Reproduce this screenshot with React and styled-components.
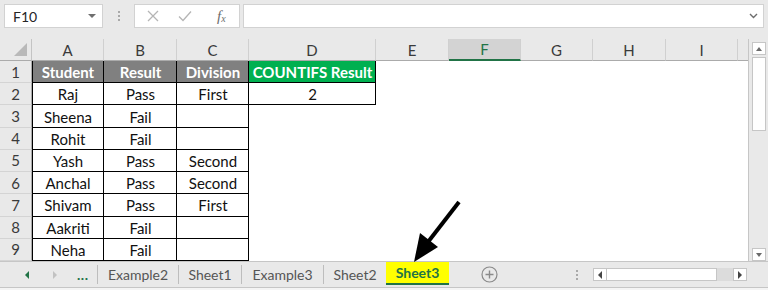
import React from "react";
import styled, { createGlobalStyle, css } from "styled-components";

const GlobalStyle = createGlobalStyle`
  html, body {
    margin: 0;
    padding: 0;
    background: #e9e9e9;
  }
  body {
    font-family: Lato, "Open Sans", sans-serif;
  }
`;

const COLUMNS = ["A", "B", "C", "D", "E", "F", "G", "H", "I", ""];
const COL_WIDTHS = [72, 73, 72, 127, 73, 72, 72, 73, 72, 10];

const ROWS = [
  ["Student", "Result", "Division", "COUNTIFS Result"],
  ["Raj", "Pass", "First", "2"],
  ["Sheena", "Fail", ""],
  ["Rohit", "Fail", ""],
  ["Yash", "Pass", "Second"],
  ["Anchal", "Pass", "Second"],
  ["Shivam", "Pass", "First"],
  ["Aakriti", "Fail", ""],
  ["Neha", "Fail", ""],
];

const TABS = [
  { name: "Example2", width: 80 },
  { name: "Sheet1", width: 62 },
  { name: "Example3", width: 81 },
  { name: "Sheet2", width: 62 },
  { name: "Sheet3", width: 63, active: true },
];

function cellKind(r, c) {
  if (r === 0 && c < 3) return "head";
  if (r === 0 && c === 3) return "green";
  if (c < 3 || (c === 3 && r < 2)) return "data";
  return "empty";
}

export default function App() {
  return (
    <Page>
      <GlobalStyle />
      <FormulaBar>
        <NameBox>
          F10
          <Caret />
        </NameBox>
        <Grip>
          <Dot />
          <Dot />
          <Dot />
        </Grip>
        <FxButtons>
          <svg width="12" height="12" viewBox="0 0 12 12">
            <path d="M1 1 L11 11 M11 1 L1 11" stroke="#b5b5b5" strokeWidth="1.3" />
          </svg>
          <svg width="14" height="12" viewBox="0 0 14 12">
            <path d="M1 6.5 L5 10.5 L13 1.5" stroke="#b5b5b5" strokeWidth="1.3" fill="none" />
          </svg>
          <Fx>
            f<sub>x</sub>
          </Fx>
        </FxButtons>
        <FormulaInput>
          <svg width="9" height="6" viewBox="0 0 9 6">
            <path d="M1 1 L4.5 4.5 L8 1" stroke="#6d6d6d" strokeWidth="1.4" fill="none" />
          </svg>
        </FormulaInput>
      </FormulaBar>

      <Main>
        <Sheet>
          <Corner>
            <CornerTriangle />
          </Corner>
          {COLUMNS.map((col, i) => (
            <ColHeader key={col + i} $active={col === "F"} $last={i === COLUMNS.length - 1}>
              {col}
            </ColHeader>
          ))}
          {ROWS.map((row, r) => (
            <React.Fragment key={r}>
              <RowHeader>{r + 1}</RowHeader>
              {COLUMNS.map((_, c) => {
                const kind = cellKind(r, c);
                return (
                  <Cell key={c} $kind={kind} $first={c === 0}>
                    {row[c] || ""}
                  </Cell>
                );
              })}
            </React.Fragment>
          ))}
        </Sheet>
        <VScroll>
          <ScrollBtn>
            <UpTri />
          </ScrollBtn>
          <VThumb />
          <VTrack />
          <ScrollBtn>
            <DownTri />
          </ScrollBtn>
        </VScroll>
      </Main>

      <TabBar>
        <TabNav>
          <NavTri $dir="left" $on />
          <NavTri $dir="right" />
          <More>...</More>
        </TabNav>
        {TABS.map((t) => (
          <React.Fragment key={t.name}>
            {!t.active && <TabSep />}
            <Tab $w={t.width} $active={t.active}>
              {t.name}
            </Tab>
          </React.Fragment>
        ))}
        <AddSheet>
          <svg width="17" height="17" viewBox="0 0 17 17">
            <circle cx="8.5" cy="8.5" r="7.5" stroke="#8a8a8a" strokeWidth="1.2" fill="none" />
            <path d="M8.5 4.5 V12.5 M4.5 8.5 H12.5" stroke="#8a8a8a" strokeWidth="1.4" />
          </svg>
        </AddSheet>
        <Splitter>
          <Dot />
          <Dot />
          <Dot />
        </Splitter>
        <HScroll>
          <HBtn>
            <NavTri $dir="left" $dark />
          </HBtn>
          <HThumb />
          <HTrack />
          <HBtn>
            <NavTri $dir="right" $dark />
          </HBtn>
        </HScroll>
      </TabBar>
      <StatusStrip />

      <Pointer width="768" height="290" viewBox="0 0 768 290">
        <line x1="459" y1="202" x2="428" y2="242" stroke="#000" strokeWidth="4" />
        <polygon points="414,262 438,247 420,233" fill="#000" />
      </Pointer>
    </Page>
  );
}

const Page = styled.div`
  position: relative;
  width: 768px;
  height: 290px;
  background: #e9e9e9;
  overflow: hidden;
`;

const FormulaBar = styled.div`
  display: flex;
  align-items: center;
  height: 24px;
  padding: 4px 4px 11px 4px;
`;

const whiteBox = css`
  background: #fff;
  border: 1px solid #d2d2d2;
  box-sizing: border-box;
  height: 24px;
`;

const NameBox = styled.div`
  ${whiteBox};
  width: 99px;
  display: flex;
  align-items: center;
  justify-content: space-between;
  padding: 0 6px 0 8px;
  font-size: 14px;
  color: #262626;
`;

const Caret = styled.span`
  width: 0;
  height: 0;
  border-left: 4px solid transparent;
  border-right: 4px solid transparent;
  border-top: 4px solid #6f6f6f;
`;

const Grip = styled.div`
  width: 31px;
  display: flex;
  flex-direction: column;
  align-items: center;
  gap: 2px;
`;

const Dot = styled.span`
  width: 2px;
  height: 2px;
  background: #a9a9a9;
`;

const FxButtons = styled.div`
  ${whiteBox};
  width: 106px;
  display: flex;
  align-items: center;
  padding-left: 12px;
  gap: 19px;
`;

const Fx = styled.span`
  font-family: "Liberation Serif", serif;
  font-style: italic;
  font-size: 15px;
  color: #6d6d6d;
  margin-left: 6px;

  sub {
    font-size: 10px;
    vertical-align: -1px;
  }
`;

const FormulaInput = styled.div`
  ${whiteBox};
  flex: 1;
  margin-left: 3px;
  display: flex;
  align-items: center;
  justify-content: flex-end;
  padding-right: 5px;
`;

const Main = styled.div`
  display: flex;
  height: 222px;
`;

const Sheet = styled.div`
  display: grid;
  grid-template-columns: 32px ${COL_WIDTHS.map((w) => w + "px").join(" ")};
  grid-template-rows: 22px repeat(9, 22.22px);
  width: 749px;
  overflow: hidden;
  background: #fff;
  border-right: 1px solid #c6c6c6;
  box-sizing: border-box;
`;

const headerBase = css`
  background: #e9e9e9;
  display: flex;
  align-items: center;
  justify-content: center;
  font-size: 15px;
  color: #3a3a3a;
  box-sizing: border-box;
`;

const Corner = styled.div`
  ${headerBase};
  position: relative;
  border-right: 1px solid #c4c4c4;
  border-bottom: 1px solid #ababab;
`;

const CornerTriangle = styled.span`
  position: absolute;
  right: 4px;
  bottom: 4px;
  width: 0;
  height: 0;
  border-left: 13px solid transparent;
  border-bottom: 13px solid #b9b9b9;
`;

const ColHeader = styled.div`
  ${headerBase};
  border-right: 1px solid #d0d0d0;
  border-bottom: 1px solid #ababab;
  ${({ $active }) =>
    $active &&
    css`
      background: #d3d3d3;
      color: #217346;
      border-bottom: 2px solid #217346;
    `}
  ${({ $last }) =>
    $last &&
    css`
      border-right: none;
    `}
`;

const RowHeader = styled.div`
  ${headerBase};
  border-right: 1px solid #ababab;
  border-bottom: 1px solid #d4d4d4;
`;

const Cell = styled.div`
  display: flex;
  align-items: center;
  justify-content: center;
  font-size: 15px;
  color: #111;
  white-space: nowrap;
  box-sizing: border-box;
  background: #fff;
  ${({ $kind, $first }) =>
    $kind !== "empty" &&
    css`
      box-shadow: inset -1px -1px 0 #000 ${$first ? ", inset 1px 0 0 #000" : ""};
    `}
  ${({ $kind }) =>
    $kind === "head" &&
    css`
      background: #808080;
      color: #fff;
      font-weight: 700;
    `}
  ${({ $kind }) =>
    $kind === "green" &&
    css`
      background: #00b050;
      color: #fff;
      font-weight: 700;
    `}
`;

const VScroll = styled.div`
  width: 14px;
  margin: 3px 0 0 3px;
  display: flex;
  flex-direction: column;
`;

const ScrollBtn = styled.div`
  height: 13px;
  background: #fff;
  border: 1px solid #c6c6c6;
  box-sizing: border-box;
  display: flex;
  align-items: center;
  justify-content: center;
`;

const UpTri = styled.span`
  border-left: 3.5px solid transparent;
  border-right: 3.5px solid transparent;
  border-bottom: 4px solid #6a6a6a;
`;

const DownTri = styled.span`
  border-left: 3.5px solid transparent;
  border-right: 3.5px solid transparent;
  border-top: 4px solid #6a6a6a;
`;

const VThumb = styled.div`
  height: 74px;
  margin-top: 2px;
  background: #fff;
  border: 1px solid #c6c6c6;
  box-sizing: border-box;
`;

const VTrack = styled.div`
  flex: 1;
`;

const TabBar = styled.div`
  display: flex;
  align-items: center;
  height: 26px;
  border-top: 1px solid #c6c6c6;
  box-sizing: border-box;
`;

const TabNav = styled.div`
  width: 97px;
  display: flex;
  align-items: center;
  padding-left: 25px;
  box-sizing: border-box;
`;

const NavTri = styled.span`
  width: 0;
  height: 0;
  border-top: 4px solid transparent;
  border-bottom: 4px solid transparent;
  ${({ $dir, $on, $dark }) => {
    const color = $on ? "#217346" : $dark ? "#444" : "#c2c2c2";
    return $dir === "left"
      ? css`
          border-right: 4px solid ${color};
        `
      : css`
          border-left: 4px solid ${color};
        `;
  }}
  ${({ $dir, $dark }) =>
    $dir === "right" &&
    !$dark &&
    css`
      margin-left: 24px;
    `}
`;

const More = styled.span`
  margin-left: 20px;
  font-size: 14px;
  font-weight: 700;
  color: #217346;
  letter-spacing: 0.5px;
`;

const TabSep = styled.span`
  width: 1px;
  height: 19px;
  background: #bdbdbd;
`;

const Tab = styled.div`
  width: ${({ $w }) => $w}px;
  height: 23px;
  display: flex;
  align-items: center;
  justify-content: center;
  font-size: 14px;
  color: #555;
  box-sizing: border-box;
  ${({ $active }) =>
    $active &&
    css`
      background: #ffff00;
      color: #217346;
      font-weight: 700;
      border-bottom: 2px solid #217346;
      align-self: flex-start;
    `}
`;

const AddSheet = styled.div`
  margin-left: 32px;
  display: flex;
  align-items: center;
`;

const Splitter = styled.div`
  margin-left: 78px;
  display: flex;
  flex-direction: column;
  gap: 2px;
`;

const HScroll = styled.div`
  margin-left: 15px;
  width: 154px;
  height: 13px;
  display: flex;
`;

const HBtn = styled.div`
  width: 14px;
  background: #fff;
  border: 1px solid #c6c6c6;
  box-sizing: border-box;
  display: flex;
  align-items: center;
  justify-content: center;
`;

const HThumb = styled.div`
  width: 110px;
  background: #fff;
  border: 1px solid #c6c6c6;
  border-left: none;
  box-sizing: border-box;
`;

const HTrack = styled.div`
  flex: 1;
  background: #dcdcdc;
`;

const StatusStrip = styled.div`
  height: 3px;
  border-top: 1px solid #c6c6c6;
  background: #f4f4f4;
`;

const Pointer = styled.svg`
  position: absolute;
  left: 0;
  top: 0;
  pointer-events: none;
`;
